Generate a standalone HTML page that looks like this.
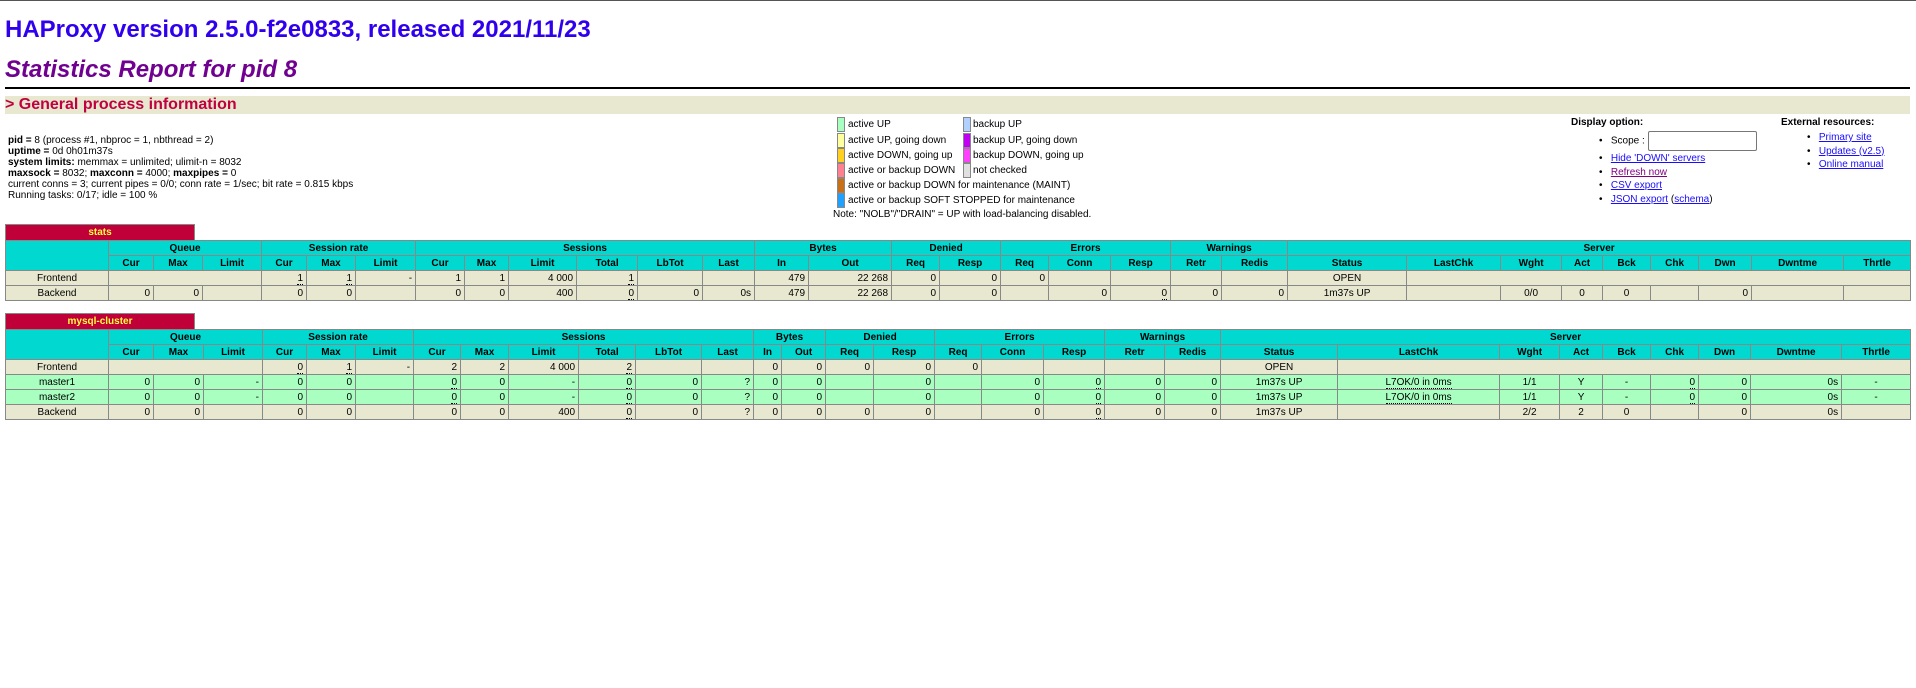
<!DOCTYPE html>
<html><head><meta charset="utf-8"><style>
body{margin:0;font-family:"Liberation Sans",Arial,sans-serif;font-size:10px;color:#000;background:#fff;width:1916px;height:688px;overflow:hidden;position:relative}
.abs{position:absolute}
#top{left:0;top:0;width:1916px;height:1px;background:#555}
h1{position:absolute;left:5px;top:16px;margin:0;font-size:24px;font-weight:bold;color:#3000ee;white-space:nowrap}
h2{position:absolute;left:5px;top:56px;margin:0;font-size:24px;font-weight:bold;font-style:italic;color:#700090;white-space:nowrap}
#hr{left:5px;top:87px;width:1905px;height:2px;background:#000}
h3{position:absolute;left:5px;top:96px;width:1905px;height:18px;margin:0;font-size:16px;line-height:18px;font-weight:bold;color:#c00040;background:#e8e8d0}
#info{left:8px;top:135px;line-height:11px;font-size:10px}
.lg{position:absolute;left:836px;font-size:10px;line-height:12px;white-space:nowrap}
.sw{position:absolute;width:8px;height:15px;border:1px solid #888;box-sizing:border-box}
a{color:#1a0dff}
table.tbl{position:absolute;left:5px;border-collapse:collapse;table-layout:fixed}
table.tbl td,table.tbl th{border:1px solid #888;padding:0 3px;font-size:10px;white-space:nowrap;overflow:hidden;height:14px;line-height:13px}
table.tbl th{background:#00d8d0;font-weight:bold;text-align:center}
table.tbl td{text-align:right}
td.ac{text-align:center!important}
tr.fe td,tr.be td{background:#e8e8d0}
tr.up td{background:#a8ffc0}
.px{position:absolute;left:5px;width:190px;height:16px;background:#c00038;color:#ffff40;font-weight:bold;font-size:10px;text-align:center;line-height:15px;border:1px solid #888;border-bottom:none;box-sizing:border-box}
u{text-decoration:none;border-bottom:1px dotted #000}
</style></head><body>
<div id="top" class="abs"></div>
<h1>HAProxy version 2.5.0-f2e0833, released 2021/11/23</h1>
<h2>Statistics Report for pid 8</h2>
<div id="hr" class="abs"></div>
<h3>&gt; General process information</h3>
<div id="info" class="abs"><b>pid = </b>8 (process #1, nbproc = 1, nbthread = 2)<br><b>uptime = </b>0d 0h01m37s<br><b>system limits:</b> memmax = unlimited; ulimit-n = 8032<br><b>maxsock = </b>8032; <b>maxconn = </b>4000; <b>maxpipes = </b>0<br>current conns = 3; current pipes = 0/0; conn rate = 1/sec; bit rate = 0.815 kbps<br>Running tasks: 0/17; idle = 100 %</div>

<div class="sw" style="left:837px;top:117px;background:#a8ffc0"></div>
<div class="sw" style="left:837px;top:133px;background:#ffffa0"></div>
<div class="sw" style="left:837px;top:148px;background:#ffd020"></div>
<div class="sw" style="left:837px;top:163px;background:#ff8090"></div>
<div class="sw" style="left:837px;top:178px;background:#c87018"></div>
<div class="sw" style="left:837px;top:193px;background:#20a0ff"></div>
<div class="sw" style="left:963px;top:117px;background:#b0d0ff"></div>
<div class="sw" style="left:963px;top:133px;background:#c000f0"></div>
<div class="sw" style="left:963px;top:148px;background:#ff40ff"></div>
<div class="sw" style="left:963px;top:163px;background:#e0e0e0"></div>
<div class="lg" style="left:848px;top:119px">active UP</div>
<div class="lg" style="left:848px;top:135px">active UP, going down</div>
<div class="lg" style="left:848px;top:150px">active DOWN, going up</div>
<div class="lg" style="left:848px;top:165px">active or backup DOWN</div>
<div class="lg" style="left:848px;top:180px">active or backup DOWN for maintenance (MAINT)</div>
<div class="lg" style="left:848px;top:195px">active or backup SOFT STOPPED for maintenance</div>
<div class="lg" style="left:973px;top:119px">backup UP</div>
<div class="lg" style="left:973px;top:135px">backup UP, going down</div>
<div class="lg" style="left:973px;top:150px">backup DOWN, going up</div>
<div class="lg" style="left:973px;top:165px">not checked</div>
<div class="lg" style="left:833px;top:209px">Note: "NOLB"/"DRAIN" = UP with load-balancing disabled.</div>

<div class="abs" style="left:1571px;top:117px;font-weight:bold">Display option:</div>
<div class="abs" style="left:1599px;top:131px;line-height:13.5px">
<div>•&nbsp;&nbsp;&nbsp;Scope : <span style="display:inline-block;width:107px;height:18px;border:1px solid #777;border-radius:2px;vertical-align:middle"></span></div>
<div style="margin-top:1px">•&nbsp;&nbsp;&nbsp;<a href="#">Hide 'DOWN' servers</a></div>
<div>•&nbsp;&nbsp;&nbsp;<a href="#" style="color:#800080">Refresh now</a></div>
<div>•&nbsp;&nbsp;&nbsp;<a href="#">CSV export</a></div>
<div>•&nbsp;&nbsp;&nbsp;<a href="#">JSON export</a> (<a href="#">schema</a>)</div>
</div>
<div class="abs" style="left:1781px;top:117px;font-weight:bold">External resources:</div>
<div class="abs" style="left:1807px;top:131px;line-height:13.5px">
<div>•&nbsp;&nbsp;&nbsp;<a href="#">Primary site</a></div>
<div>•&nbsp;&nbsp;&nbsp;<a href="#">Updates (v2.5)</a></div>
<div>•&nbsp;&nbsp;&nbsp;<a href="#">Online manual</a></div>
</div>

<div class="px" style="top:224px">stats</div>
<table class="tbl" style="top:240px;width:1905px">
<colgroup><col style="width:103px"><col style="width:45px"><col style="width:49px"><col style="width:59px"><col style="width:45px"><col style="width:49px"><col style="width:60px"><col style="width:49px"><col style="width:44px"><col style="width:68px"><col style="width:61px"><col style="width:65px"><col style="width:52px"><col style="width:54px"><col style="width:83px"><col style="width:48px"><col style="width:61px"><col style="width:48px"><col style="width:62px"><col style="width:60px"><col style="width:51px"><col style="width:66px"><col style="width:119px"><col style="width:94px"><col style="width:61px"><col style="width:41px"><col style="width:48px"><col style="width:48px"><col style="width:53px"><col style="width:92px"><col style="width:67px"></colgroup>
<tr><th rowspan="2"></th><th colspan="3">Queue</th><th colspan="3">Session rate</th><th colspan="6">Sessions</th><th colspan="2">Bytes</th><th colspan="2">Denied</th><th colspan="3">Errors</th><th colspan="2">Warnings</th><th colspan="9">Server</th></tr>
<tr><th>Cur</th><th>Max</th><th>Limit</th><th>Cur</th><th>Max</th><th>Limit</th><th>Cur</th><th>Max</th><th>Limit</th><th>Total</th><th>LbTot</th><th>Last</th><th>In</th><th>Out</th><th>Req</th><th>Resp</th><th>Req</th><th>Conn</th><th>Resp</th><th>Retr</th><th>Redis</th><th>Status</th><th>LastChk</th><th>Wght</th><th>Act</th><th>Bck</th><th>Chk</th><th>Dwn</th><th>Dwntme</th><th>Thrtle</th></tr>
<tr class="fe"><td class="ac">Frontend</td><td colspan="3"></td><td><u>1</u></td><td><u>1</u></td><td>-</td><td>1</td><td>1</td><td>4 000</td><td><u>1</u></td><td></td><td></td><td>479</td><td>22 268</td><td>0</td><td>0</td><td>0</td><td></td><td></td><td></td><td></td><td class="ac">OPEN</td><td colspan="8"></td></tr>
<tr class="be"><td class="ac">Backend</td><td>0</td><td>0</td><td></td><td>0</td><td>0</td><td></td><td>0</td><td>0</td><td>400</td><td><u>0</u></td><td>0</td><td>0s</td><td>479</td><td>22 268</td><td>0</td><td>0</td><td></td><td>0</td><td><u>0</u></td><td>0</td><td>0</td><td class="ac">1m37s UP</td><td></td><td class="ac">0/0</td><td class="ac">0</td><td class="ac">0</td><td></td><td>0</td><td></td><td></td></tr>
</table>

<div class="px" style="top:313px">mysql-cluster</div>
<table class="tbl" style="top:329px;width:1905px">
<colgroup><col style="width:103px"><col style="width:45px"><col style="width:50px"><col style="width:59px"><col style="width:44px"><col style="width:49px"><col style="width:58px"><col style="width:47px"><col style="width:48px"><col style="width:70px"><col style="width:57px"><col style="width:66px"><col style="width:52px"><col style="width:28px"><col style="width:44px"><col style="width:48px"><col style="width:61px"><col style="width:47px"><col style="width:62px"><col style="width:61px"><col style="width:60px"><col style="width:56px"><col style="width:117px"><col style="width:162px"><col style="width:60px"><col style="width:43px"><col style="width:48px"><col style="width:48px"><col style="width:52px"><col style="width:91px"><col style="width:69px"></colgroup>
<tr><th rowspan="2"></th><th colspan="3">Queue</th><th colspan="3">Session rate</th><th colspan="6">Sessions</th><th colspan="2">Bytes</th><th colspan="2">Denied</th><th colspan="3">Errors</th><th colspan="2">Warnings</th><th colspan="9">Server</th></tr>
<tr><th>Cur</th><th>Max</th><th>Limit</th><th>Cur</th><th>Max</th><th>Limit</th><th>Cur</th><th>Max</th><th>Limit</th><th>Total</th><th>LbTot</th><th>Last</th><th>In</th><th>Out</th><th>Req</th><th>Resp</th><th>Req</th><th>Conn</th><th>Resp</th><th>Retr</th><th>Redis</th><th>Status</th><th>LastChk</th><th>Wght</th><th>Act</th><th>Bck</th><th>Chk</th><th>Dwn</th><th>Dwntme</th><th>Thrtle</th></tr>
<tr class="fe"><td class="ac">Frontend</td><td colspan="3"></td><td><u>0</u></td><td><u>1</u></td><td>-</td><td>2</td><td>2</td><td>4 000</td><td><u>2</u></td><td></td><td></td><td>0</td><td>0</td><td>0</td><td>0</td><td>0</td><td></td><td></td><td></td><td></td><td class="ac">OPEN</td><td colspan="8"></td></tr>
<tr class="up"><td class="ac">master1</td><td>0</td><td>0</td><td>-</td><td>0</td><td>0</td><td></td><td><u>0</u></td><td>0</td><td>-</td><td><u>0</u></td><td>0</td><td>?</td><td>0</td><td>0</td><td></td><td>0</td><td></td><td>0</td><td><u>0</u></td><td>0</td><td>0</td><td class="ac">1m37s UP</td><td class="ac"><u>L7OK/0 in 0ms</u></td><td class="ac">1/1</td><td class="ac">Y</td><td class="ac">-</td><td><u>0</u></td><td>0</td><td>0s</td><td class="ac">-</td></tr>
<tr class="up"><td class="ac">master2</td><td>0</td><td>0</td><td>-</td><td>0</td><td>0</td><td></td><td><u>0</u></td><td>0</td><td>-</td><td><u>0</u></td><td>0</td><td>?</td><td>0</td><td>0</td><td></td><td>0</td><td></td><td>0</td><td><u>0</u></td><td>0</td><td>0</td><td class="ac">1m37s UP</td><td class="ac"><u>L7OK/0 in 0ms</u></td><td class="ac">1/1</td><td class="ac">Y</td><td class="ac">-</td><td><u>0</u></td><td>0</td><td>0s</td><td class="ac">-</td></tr>
<tr class="be"><td class="ac">Backend</td><td>0</td><td>0</td><td></td><td>0</td><td>0</td><td></td><td>0</td><td>0</td><td>400</td><td><u>0</u></td><td>0</td><td>?</td><td>0</td><td>0</td><td>0</td><td>0</td><td></td><td>0</td><td><u>0</u></td><td>0</td><td>0</td><td class="ac">1m37s UP</td><td></td><td class="ac">2/2</td><td class="ac">2</td><td class="ac">0</td><td></td><td>0</td><td>0s</td><td></td></tr>
</table>
</body></html>
